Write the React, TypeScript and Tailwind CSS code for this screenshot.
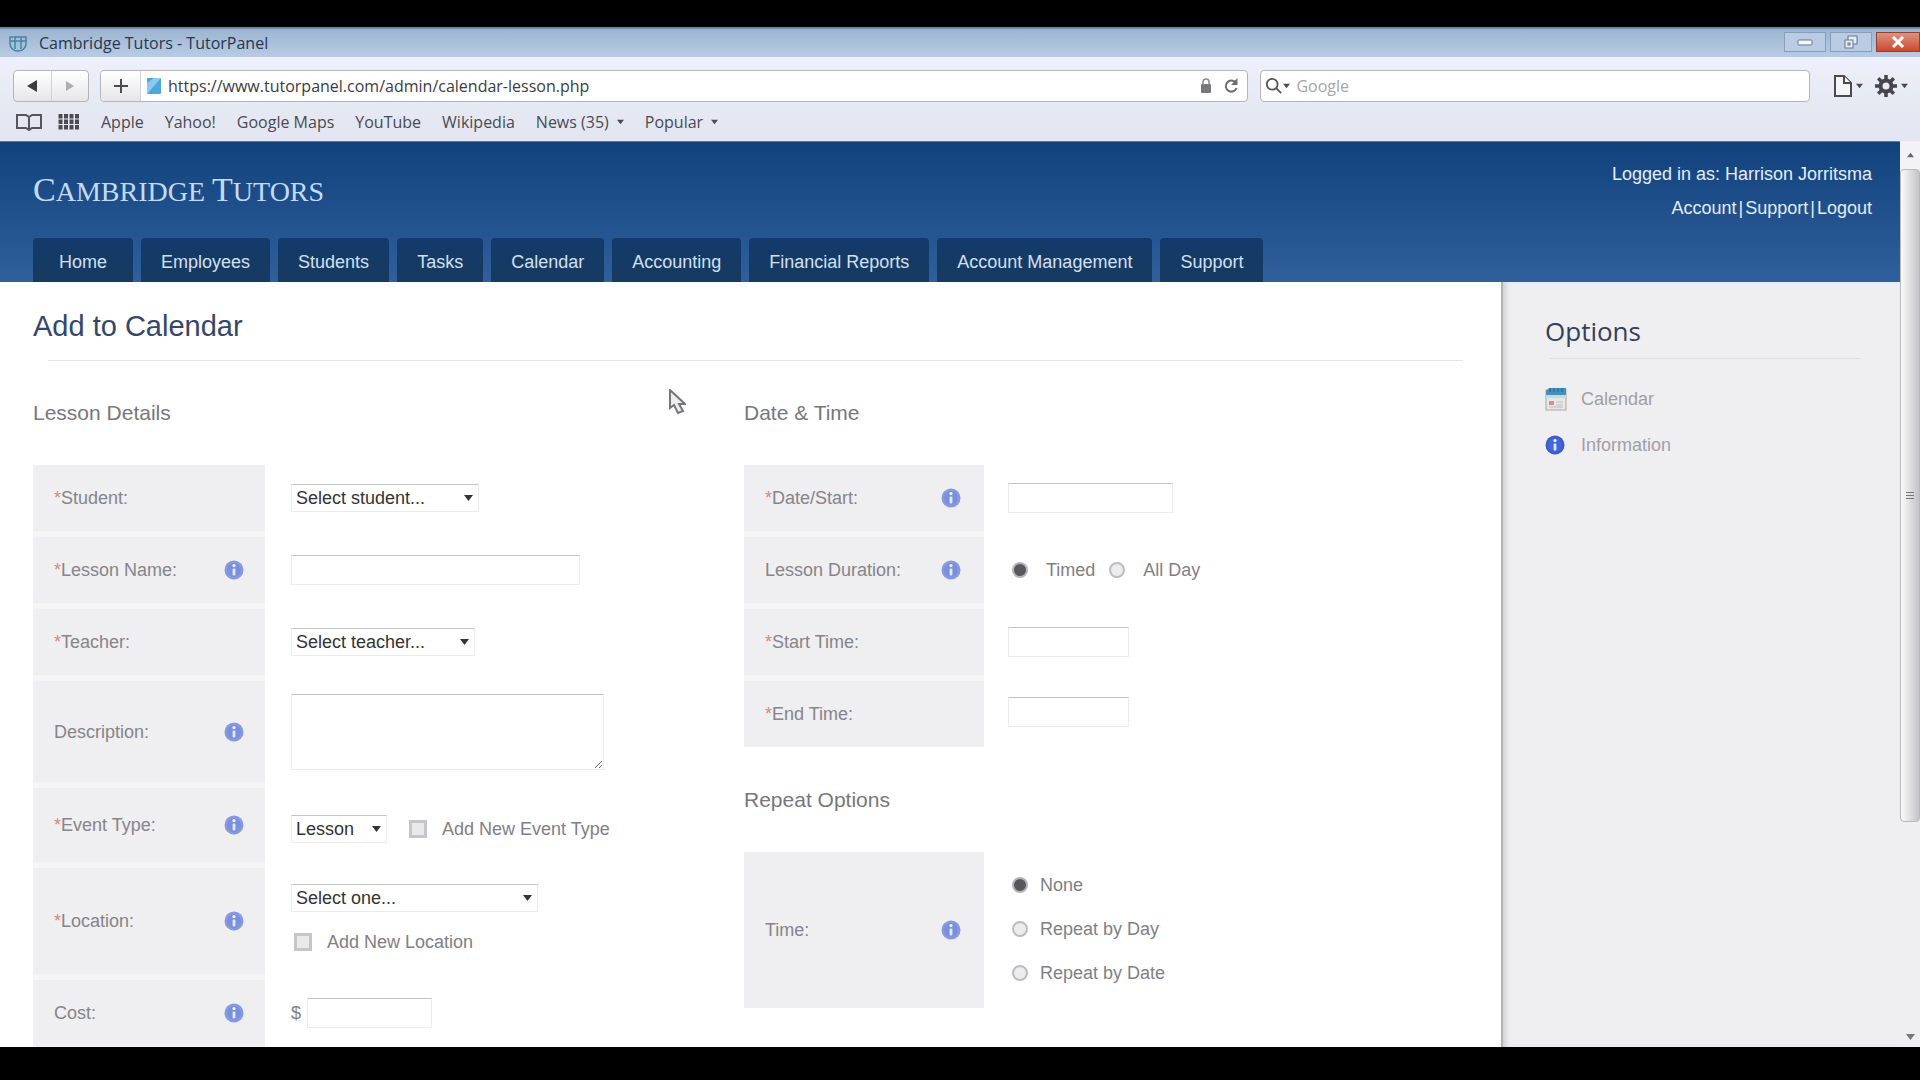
import React, { useState } from 'react';

const bookmarks = ['Apple', 'Yahoo!', 'Google Maps', 'YouTube', 'Wikipedia', 'News (35)', 'Popular'];
const menus = ['News (35)', 'Popular'];

const navItems = [
  'Home',
  'Employees',
  'Students',
  'Tasks',
  'Calendar',
  'Accounting',
  'Financial Reports',
  'Account Management',
  'Support',
];

const fieldStyle = 'border border-[#ececef] border-t-[#c4c4c6] bg-white text-lg text-[#333] outline-none';

function InfoIcon({ strong = false }: { strong?: boolean }) {
  return (
    <svg className="h-5 w-5 shrink-0" viewBox="0 0 20 20" aria-hidden="true">
      <circle cx="10" cy="10" r="9.5" fill={strong ? '#3c5bd0' : '#8799df'} />
      <circle cx="10" cy="10" r="7" fill={strong ? '#4468d8' : '#7b90dc'} />
      <circle cx="10" cy="5.6" r="1.6" fill="#eef3ff" />
      <rect x="8.6" y="8.4" width="2.8" height="7" rx="1" fill="#dfe9ff" />
    </svg>
  );
}

function CalendarIcon() {
  return (
    <svg className="h-6 w-[22px] shrink-0" viewBox="0 0 22 24" aria-hidden="true">
      <rect x="1" y="3" width="20" height="20" fill="#e9e6e6" stroke="#a9a5a5" />
      <path d="M1 8V4l3-3h17v7z" fill="#4a8fb8" />
      <path d="M5 1v4M9 1v4M13 1v4M17 1v4" stroke="#2f7199" strokeWidth="1.5" />
      <rect x="1" y="8" width="20" height="3" fill="#b5dff2" />
      <rect x="4" y="14" width="5" height="4" fill="#d08f8c" />
      <path d="M11 15h7M11 18h7M4 20h14" stroke="#c3bebe" />
    </svg>
  );
}

function Caret({ className = 'w-[9px]' }: { className?: string }) {
  return (
    <svg className={`h-[6px] shrink-0 ${className}`} viewBox="0 0 9 6" aria-hidden="true">
      <path d="M0 0h9L4.500 6z" fill="currentColor" />
    </svg>
  );
}

function TitleBar() {
  return (
    <div className="flex h-[30px] items-center border-t-2 border-[#6d87a5] bg-linear-to-b from-[#9db5d2] to-[#b7cbe5]">
      <svg className="ml-2 h-5 w-5" viewBox="0 0 20 20" fill="none" stroke="#4f7f9f" strokeWidth="1.5" aria-hidden="true">
        <path d="M2 4h16v7a8 7 0 0 1-16 0z" fill="#9cc4da" />
        <path d="M2 8h16M7 4v12M13 4v12" />
      </svg>
      <span className="ml-[11px] grow text-base text-[#27374d]">Cambridge Tutors - TutorPanel</span>
      <div className="flex items-start self-start pt-[3px]">
        <button aria-label="Minimize" className="flex h-5 w-[42px] items-center justify-center border border-[#8a9db8] bg-[#b9cce4]">
          <svg className="h-2 w-4" viewBox="0 0 16 8">
            <rect x="1" y="2" width="14" height="5" rx="1" fill="#f4f8fc" stroke="#66758c" />
          </svg>
        </button>
        <button aria-label="Restore" className="ml-1 flex h-5 w-[42px] items-center justify-center border border-[#8a9db8] bg-[#b9cce4]">
          <svg className="h-4 w-4" viewBox="0 0 16 16" fill="#e4ecf6" stroke="#66758c">
            <rect x="5" y="2" width="9" height="8" />
            <rect x="2" y="6" width="8" height="8" />
            <rect x="5" y="9" width="2" height="2" />
          </svg>
        </button>
        <button aria-label="Close" className="ml-1 flex h-5 w-11 items-center justify-center border border-[#8d4336] bg-linear-to-b from-[#dd9180] to-[#c9482c]">
          <svg className="h-3 w-4" viewBox="0 0 16 12">
            <path d="M3 1l10 10M13 1L3 11" stroke="#fff" strokeWidth="3" />
          </svg>
        </button>
      </div>
    </div>
  );
}

function Toolbar() {
  return (
    <div className="bg-linear-to-b from-[#eef0fb] via-[#e6eaf2] to-[#e3e5f2] text-[#4a4a50]">
      <div className="flex items-center pt-[13px] pr-3 pl-[13px]">
        <div className="flex h-8 w-[76px] rounded border border-[#b4b5ba] bg-linear-to-b from-white to-[#e6e6ea]">
          <button aria-label="Back" className="flex flex-1 items-center justify-center border-r border-[#cfd0d5]">
            <svg className="h-3 w-3" viewBox="0 0 12 12">
              <path d="M11 0v12L1 6z" fill="#3c3c40" />
            </svg>
          </button>
          <button aria-label="Forward" className="flex flex-1 items-center justify-center">
            <svg className="h-[10px] w-[10px]" viewBox="0 0 10 10">
              <path d="M1 0v10l8-5z" fill="#adadb2" />
            </svg>
          </button>
        </div>
        <div className="ml-[11px] flex h-8 grow items-center rounded border border-[#b4b5ba] bg-white">
          <button aria-label="Add bookmark" className="flex h-full w-10 items-center justify-center rounded-l border-r border-[#cfd0d5] bg-linear-to-b from-white to-[#e6e6ea]">
            <svg className="h-[14px] w-[14px]" viewBox="0 0 14 14">
              <path d="M7 0v14M0 7h14" stroke="#4c4c50" strokeWidth="2" />
            </svg>
          </button>
          <svg className="ml-[5px] h-[18px] w-4" viewBox="0 0 16 18" aria-hidden="true">
            <rect x="1" y="1" width="14" height="16" rx="1" fill="#4fa6db" />
            <path d="M1 17V6l7-5h7z" fill="#8acbed" />
          </svg>
          <input
            aria-label="Address"
            className="ml-[6px] min-w-0 grow text-base text-[#3c3c42] outline-none"
            defaultValue="https://www.tutorpanel.com/admin/calendar-lesson.php"
          />
          <svg className="mr-3 h-4 w-[10px]" viewBox="0 0 10 16" aria-hidden="true">
            <rect y="6" width="10" height="9" rx="1" fill="#77777c" />
            <path d="M2 7V4a3 3 0 0 1 6 0v3" fill="none" stroke="#8b8b90" strokeWidth="1.5" />
          </svg>
          <button aria-label="Reload" className="mr-2">
            <svg className="h-4 w-4" viewBox="0 0 16 16" fill="none">
              <path d="M12.500 4.500A5.500 5.500 0 1 0 13.500 10" stroke="#6b6b70" strokeWidth="2" />
              <path d="M14.500 0v7H8z" fill="#6b6b70" />
            </svg>
          </button>
        </div>
        <label className="ml-3 flex h-8 w-[29%] items-center rounded border border-[#b4b5ba] bg-white">
          <svg className="ml-1 h-[18px] w-[18px]" viewBox="0 0 20 20" fill="none" stroke="#55555a" strokeWidth="2">
            <circle cx="8" cy="8" r="6" />
            <path d="M12 12l6 6" />
          </svg>
          <Caret className="w-[7px]" />
          <input aria-label="Search" placeholder="Google" className="ml-[6px] min-w-0 grow text-base outline-none placeholder:text-[#a6a6ab]" />
        </label>
        <button aria-label="Page menu" className="ml-6 flex items-center gap-1">
          <svg className="h-[22px] w-[18px]" viewBox="0 0 18 22" fill="#f5f5f8" stroke="#4a4a50" strokeWidth="2">
            <path d="M1 1h9l7 7v13H1z" />
            <path d="M10 1v7h7" />
          </svg>
          <Caret className="w-[7px]" />
        </button>
        <button aria-label="Settings menu" className="ml-3 flex items-center gap-1">
          <svg className="h-[22px] w-[22px]" viewBox="0 0 22 22" fill="none" stroke="#45454b">
            <circle cx="11" cy="11" r="5.500" strokeWidth="4" />
            <path d="M11 0v4M11 18v4M0 11h4M18 11h4M3.200 3.200l3 3M15.800 15.800l3 3M18.800 3.200l-3 3M6.200 15.800l-3 3" strokeWidth="3.500" />
          </svg>
          <Caret className="w-[7px]" />
        </button>
      </div>
      <div className="flex h-[39px] items-center gap-[21px] pl-4 text-base">
        <div className="flex items-center gap-4">
          <svg className="h-[18px] w-[26px]" viewBox="0 0 26 18" fill="none" stroke="#55555a" strokeWidth="2" aria-hidden="true">
            <path d="M1 2h9l3 2 3-2h9v13h-9l-3 2-3-2H1zM13 4v13" />
          </svg>
          <svg className="h-[18px] w-[22px]" viewBox="0 0 22 18" stroke="#4a4a50" aria-hidden="true">
            <path d="M2.500 1v16M8 1v16M13.500 1v16M19 1v16" strokeWidth="4" strokeDasharray="4.500 1" />
          </svg>
        </div>
        {bookmarks.map(item => (
          <a key={item} href="#" className="flex items-center gap-2">
            {item}
            {menus.includes(item) && <Caret className="w-[7px]" />}
          </a>
        ))}
      </div>
    </div>
  );
}

function SiteHeader() {
  return (
    <header className="border-t border-[#5d7c9f] bg-linear-to-b from-[#11427c] to-[#30609c]">
      <div className="flex h-24 justify-between pr-7 pl-[33px]">
        <h1 className="pt-7 font-['Liberation_Serif',serif] text-[28px] leading-10 text-[#c3dcf6] uppercase">
          <span className="text-[34px]">C</span>ambridge <span className="text-[34px]">T</span>utors
        </h1>
        <div className="pt-[15px] text-right text-lg leading-[34px] text-[#e3edfa]">
          <p>Logged in as: Harrison Jorritsma</p>
          <p className="flex justify-end gap-[2px]">
            <a href="#">Account</a>|<a href="#">Support</a>|<a href="#">Logout</a>
          </p>
        </div>
      </div>
      <nav className="flex gap-2 pl-[33px]">
        {navItems.map(item => (
          <a
            key={item}
            href="#"
            className="rounded-t-sm bg-linear-to-b from-[#123a6b] to-[#173a60] px-5 pt-[6px] pb-[2px] text-lg leading-9 text-[#d3e0f0] first:px-[26px]"
          >
            {item}
          </a>
        ))}
      </nav>
    </header>
  );
}

type RowProps = {
  label: string;
  htmlFor?: string;
  required?: boolean;
  info?: boolean;
  last?: boolean;
  wide?: boolean;
  height?: string;
  pad?: string;
  children: React.ReactNode;
};

function Row({ label, htmlFor, required, info, last, wide, height = 'min-h-[72px]', pad = 'pb-[6px]', children }: RowProps) {
  return (
    <div className={`flex ${height}`}>
      <div
        className={`flex shrink-0 items-center justify-between bg-[#efeef0] pl-[21px] ${wide ? 'w-60 pr-[23px]' : 'w-[232px] pr-[21px]'} ${last ? '' : 'border-b-[6px] border-[#f5f5f6]'}`}
      >
        <label htmlFor={htmlFor} className="text-lg text-[#85858a]">
          {required && <span className="text-[#d08a8a]">*</span>}
          {label}:
        </label>
        {info && <InfoIcon />}
      </div>
      <div className={`flex grow items-center text-lg text-[#808085] ${pad} ${wide ? 'pl-6' : 'pl-[26px]'}`}>{children}</div>
    </div>
  );
}

function Select({ id, text, width }: { id: string; text: string; width: string }) {
  return (
    <div className={`relative ${width}`}>
      <select id={id} className={`h-7 w-full appearance-none pr-6 pl-1 leading-6 ${fieldStyle}`}>
        <option>{text}</option>
      </select>
      <Caret className="pointer-events-none absolute top-[11px] right-[6px] w-[9px] text-[#333]" />
    </div>
  );
}

function Checkbox({ label }: { label: string }) {
  return (
    <label className="flex items-center gap-[15px]">
      <input type="checkbox" className="h-[18px] w-[18px] appearance-none border-[3px] border-[#c6c6c8] bg-[#e9e9eb] checked:bg-[#777]" />
      {label}
    </label>
  );
}

function Radio({ name, label, checked, onChange, gap = 'gap-3' }: { name: string; label: string; checked: boolean; onChange: () => void; gap?: string }) {
  return (
    <label className={`flex items-center ${gap}`}>
      <input
        type="radio"
        name={name}
        checked={checked}
        onChange={onChange}
        className="h-4 w-4 appearance-none rounded-full border-2 border-[#bdbdc0] bg-[#ececee] checked:border-[#b5b5b8] checked:bg-[#55595c]"
      />
      {label}
    </label>
  );
}

function LessonDetails() {
  return (
    <section>
      <h3 className="text-[21px] leading-7 text-[#77777c]">Lesson Details</h3>
      <div className="mt-[38px]">
        <Row label="Student" htmlFor="student" required>
          <Select id="student" text="Select student..." width="w-[188px]" />
        </Row>
        <Row label="Lesson Name" htmlFor="name" required info>
          <input id="name" className={`h-[30px] w-[289px] px-1 ${fieldStyle}`} />
        </Row>
        <Row label="Teacher" htmlFor="teacher" required>
          <Select id="teacher" text="Select teacher..." width="w-[184px]" />
        </Row>
        <Row label="Description" htmlFor="description" info height="min-h-[107px]">
          <textarea id="description" className={`h-[76px] w-[313px] px-1 ${fieldStyle}`} />
        </Row>
        <Row label="Event Type" htmlFor="event" required info height="min-h-[80px]" pad="pt-[2px]">
          <Select id="event" text="Lesson" width="mr-[22px] w-24" />
          <Checkbox label="Add New Event Type" />
        </Row>
        <Row label="Location" htmlFor="location" required info height="min-h-[112px]" pad="pb-2">
          <div className="space-y-4">
            <Select id="location" text="Select one..." width="w-[247px]" />
            <div className="pl-[3px]">
              <Checkbox label="Add New Location" />
            </div>
          </div>
        </Row>
        <Row label="Cost" htmlFor="cost" info>
          $
          <input id="cost" className={`ml-[6px] h-[30px] w-[125px] px-1 ${fieldStyle}`} />
        </Row>
      </div>
    </section>
  );
}

function DateAndTime() {
  const [duration, setDuration] = useState('Timed');
  const [repeat, setRepeat] = useState('None');

  return (
    <section>
      <h3 className="text-[21px] leading-7 text-[#77777c]">Date &amp; Time</h3>
      <div className="mt-[38px]">
        <Row label="Date/Start" htmlFor="date" required info wide>
          <input id="date" className={`h-[30px] w-[165px] px-1 ${fieldStyle}`} />
        </Row>
        <Row label="Lesson Duration" info wide>
          <div className="flex gap-[14px] pl-1">
            {['Timed', 'All Day'].map(item => (
              <Radio key={item} name="duration" label={item} checked={duration === item} onChange={() => setDuration(item)} gap="gap-[18px]" />
            ))}
          </div>
        </Row>
        <Row label="Start Time" htmlFor="start" required wide>
          <input id="start" className={`h-[30px] w-[121px] px-1 ${fieldStyle}`} />
        </Row>
        <Row label="End Time" htmlFor="end" required wide last height="min-h-[66px]" pad="pb-1">
          <input id="end" className={`h-[30px] w-[121px] px-1 ${fieldStyle}`} />
        </Row>
      </div>

      <h3 className="mt-[39px] text-[21px] leading-7 text-[#77777c]">Repeat Options</h3>
      <div className="mt-[38px]">
        <Row label="Time" info wide last height="min-h-[156px]" pad="pb-[2px]">
          <div className="space-y-4 pl-1">
            {['None', 'Repeat by Day', 'Repeat by Date'].map(item => (
              <Radio key={item} name="repeat" label={item} checked={repeat === item} onChange={() => setRepeat(item)} />
            ))}
          </div>
        </Row>
      </div>
    </section>
  );
}

function Sidebar() {
  return (
    <aside className="w-[399px] shrink-0 border-l-2 border-[#b4b4b8] bg-[#efeef1] pt-[29px] pr-10 pl-[42px] shadow-[inset_6px_0_6px_-4px_#c9c9cc]">
      <h2 className="font-['Open_Sans',sans-serif] text-[26px] leading-10 text-[#34405c]">Options</h2>
      <div className="mt-[7px] ml-[5px] h-px bg-[#dce0e0]" />
      <ul className="mt-[26px] space-y-[18px] text-lg leading-7 text-[#a0a0a4]">
        <li>
          <a href="#" className="flex items-center gap-[14px]">
            <CalendarIcon />
            Calendar
          </a>
        </li>
        <li>
          <a href="#" className="flex items-center gap-4">
            <InfoIcon strong />
            Information
          </a>
        </li>
      </ul>
    </aside>
  );
}

function Scrollbar() {
  return (
    <div className="flex w-5 shrink-0 flex-col items-center bg-[#efeef1]" aria-hidden="true">
      <div className="flex h-7 w-full items-center justify-center bg-[#f3f2f6]">
        <Caret className="w-[7px] rotate-180 text-[#666]" />
      </div>
      <div className="flex w-full grow-[653] flex-col items-center justify-center gap-[2px] rounded-sm border border-[#b9b9bc] bg-linear-to-r from-[#fafafa] to-[#c4c4c8]">
        <span className="h-px w-2 bg-[#77777b]" />
        <span className="h-px w-2 bg-[#77777b]" />
        <span className="h-px w-2 bg-[#77777b]" />
      </div>
      <div className="grow-[208]" />
      <div className="flex h-5 items-center">
        <Caret className="w-[9px] text-[#777]" />
      </div>
    </div>
  );
}

export default function App() {
  return (
    <div className="relative flex h-screen flex-col overflow-hidden bg-black pt-[27px] pb-[33px] font-['Liberation_Sans',Arial,sans-serif]">
      <div className="shrink-0 font-['Open_Sans',sans-serif]">
        <TitleBar />
        <Toolbar />
      </div>
      <div className="flex min-h-0 grow">
        <div className="flex min-w-0 grow flex-col overflow-hidden bg-white">
          <SiteHeader />
          <div className="flex min-h-0 grow">
            <main className="min-w-0 grow overflow-hidden pt-6 pr-[38px] pl-[33px]">
              <h2 className="text-[29px] leading-10 text-[#34466b]">Add to Calendar</h2>
              <div className="mt-[14px] ml-[15px] h-px bg-[#e6e6e9]" />
              <form className="mt-[38px] grid grid-cols-2 pr-2">
                <LessonDetails />
                <DateAndTime />
              </form>
            </main>
            <Sidebar />
          </div>
        </div>
        <Scrollbar />
      </div>

      {/* Mouse pointer */}
      <svg className="pointer-events-none absolute top-[389px] left-[669px] h-[26px] w-[17px]" viewBox="0 0 17 26">
        <path d="M1 1v18l4-3 4 8 5-2-4-7h6z" fill="#ededed" stroke="#77777b" strokeWidth="2" />
      </svg>
    </div>
  );
}
